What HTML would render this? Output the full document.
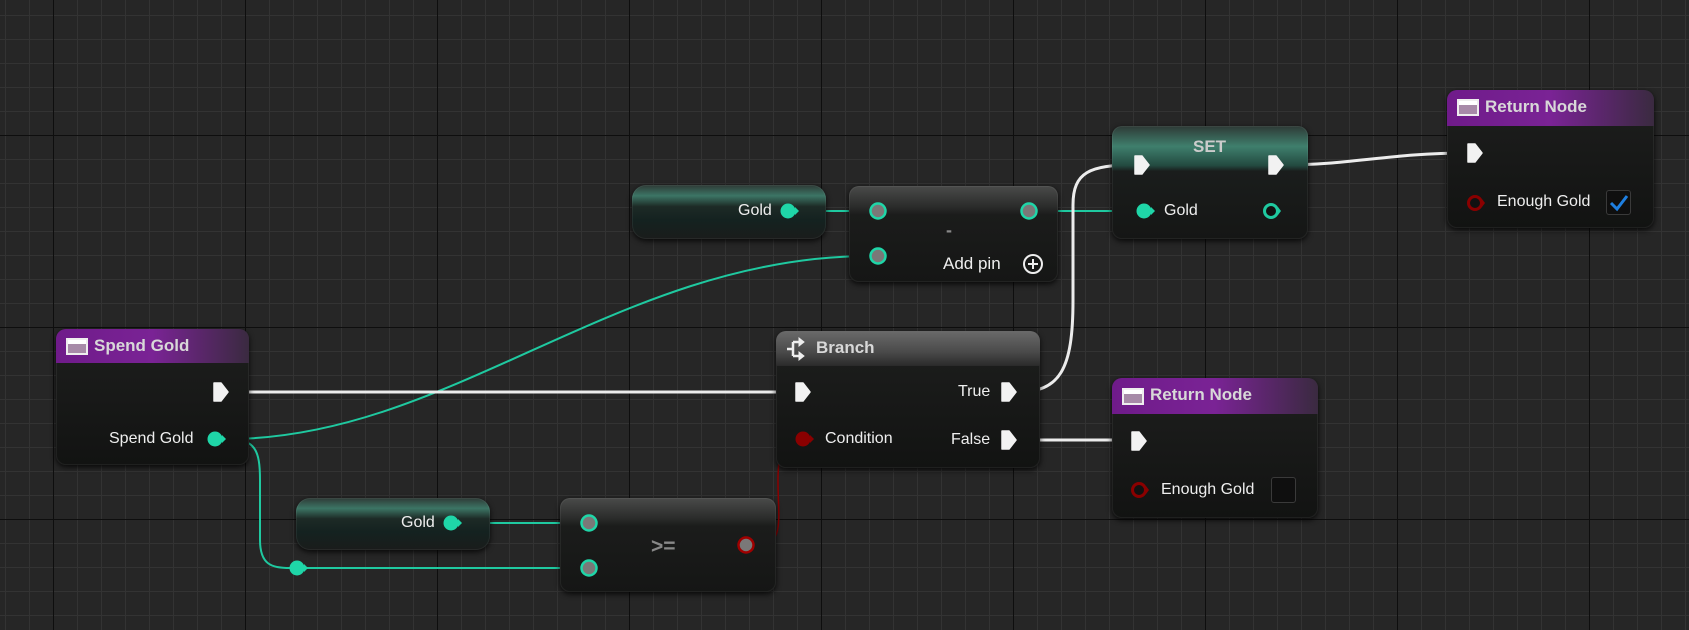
<!DOCTYPE html>
<html><head><meta charset="utf-8"><style>
html,body{margin:0;padding:0;width:1689px;height:630px;overflow:hidden;background:#262626;font-family:"Liberation Sans",sans-serif;}
#grid{position:absolute;left:0;top:0;width:1689px;height:630px;
background-image:
linear-gradient(to right,#0e0e0e 0,#0e0e0e 1px,transparent 1px),
linear-gradient(to bottom,#0e0e0e 0,#0e0e0e 1px,transparent 1px),
linear-gradient(to right,#333 0,#333 1px,transparent 1px),
linear-gradient(to bottom,#333 0,#333 1px,transparent 1px);
background-size:192px 192px,192px 192px,24px 24px,24px 24px;
background-position:53px 0,0 135px,53px 0,0 135px;}
.n{position:absolute;border-radius:10px;background:linear-gradient(#1e1f1e,#121312);box-shadow:0 2px 6px rgba(0,0,0,.8),inset 0 0 0 1px rgba(255,255,255,.06);}
.h{position:absolute;left:0;right:0;top:0;border-radius:10px 10px 0 0;color:#d8d8d8;font-weight:bold;font-size:17px;line-height:34px;padding-left:38px;box-sizing:border-box}
.ph{background:linear-gradient(to right,#6f1b8a,#7a2395 50%,#3a2a40 100%)}
.ico{position:absolute;left:10px;top:9px;width:22px;height:17px;border:2px solid #eee;box-sizing:border-box;background:linear-gradient(#fff 0 30%,#a78aa8 30%)}
.pure{background:linear-gradient(#4a4b4a,#2a2b2a 22%,#1b1c1b 30%,#151615);}
.var{background:linear-gradient(#2e3a36,#3c7565 20%,#1d2a26 40%,#142220 65%,#1a1c1b 100%);border-radius:14px}
.t{position:absolute;color:#eee;font-size:16px;white-space:nowrap}
.setg{background:linear-gradient(#2e3a36,#3f7f6d 18%,#234a40 35%,#1a1d1c 40%,#151615);}
</style></head><body>
<div id="grid"></div>
<svg width="1689" height="630" style="position:absolute;left:0;top:0" fill="none">
<g stroke="#1fc9a0" stroke-width="2">
<path d="M228 439 C450 439 620 256 870 256"/>
<path d="M228 439 C255 439 260 450 260 480 L260 540 C260 565 272 568 290 568 L589 568"/>
<path d="M463 523 L589 523"/>
<path d="M800 211 L878 211"/>
<path d="M1029 211 L1144 211"/>
</g>
<g stroke="#ececec" stroke-width="3">
<path d="M232 392 L795 392"/>
<path d="M1017 392 C1060 392 1073 370 1073 300 L1073 205 C1073 172 1090 165 1134 165"/>
<path d="M1017 440 L1133 440"/>
<path d="M1284 165 C1350 165 1390 153 1468 153"/>
</g>
<path d="M757 545 C785 545 778 520 778 480 C778 450 785 439 797 439" stroke="#8a0000" stroke-width="1.5"/>
</svg>

<div class="n" style="left:56px;top:329px;width:193px;height:136px"><div class="h ph" style="height:34px">Spend Gold<div class="ico"></div></div></div>
<div class="t" style="left:109px;top:430px">Spend Gold</div>

<div class="n var" style="left:632px;top:185px;width:194px;height:54px"></div>
<div class="t" style="left:738px;top:202px">Gold</div>

<div class="n var" style="left:296px;top:498px;width:194px;height:52px"></div>
<div class="t" style="left:401px;top:514px">Gold</div>

<div class="n pure" style="left:849px;top:186px;width:209px;height:96px"></div>
<div class="t" style="left:946px;top:220px;color:#888;font-weight:bold;font-size:18px">-</div>
<div class="t" style="left:943px;top:254px;font-size:17px">Add pin</div>

<div class="n setg" style="left:1112px;top:126px;width:196px;height:113px"></div>
<div class="t" style="left:1193px;top:137px;color:#ccc;font-weight:bold;font-size:17px">SET</div>
<div class="t" style="left:1164px;top:202px">Gold</div>

<div class="n" style="left:1447px;top:90px;width:207px;height:138px"><div class="h ph" style="height:36px">Return Node<div class="ico"></div></div></div>
<div class="t" style="left:1497px;top:193px">Enough Gold</div>
<div style="position:absolute;left:1606px;top:190px;width:25px;height:25px;border:1px solid #3a3a3a;border-radius:3px;background:#0f0f0f;box-sizing:border-box"></div>

<div class="n" style="left:776px;top:331px;width:264px;height:137px"><div class="h" style="height:35px;background:linear-gradient(#6a6a6a,#4a4a4a 60%,#2a2a2a);padding-left:40px">Branch</div></div>
<div class="t" style="left:825px;top:430px">Condition</div>
<div class="t" style="left:958px;top:383px">True</div>
<div class="t" style="left:951px;top:431px">False</div>

<div class="n" style="left:1112px;top:378px;width:206px;height:140px"><div class="h ph" style="height:36px">Return Node<div class="ico" style="top:10px"></div></div></div>
<div class="t" style="left:1161px;top:481px">Enough Gold</div>
<div style="position:absolute;left:1271px;top:477px;width:25px;height:26px;border:1px solid #3a3a3a;border-radius:3px;background:#0f0f0f;box-sizing:border-box"></div>

<div class="n pure" style="left:560px;top:498px;width:216px;height:94px"></div>
<div class="t" style="left:651px;top:535px;color:#888;font-weight:bold;font-size:21px">&gt;=</div>

<svg width="1689" height="630" style="position:absolute;left:0;top:0">
<defs>
<g id="ex"><path d="M-7 -9 H0 L7 0 L0 9 H-7 Z" fill="#f2f2f2" stroke="#f2f2f2" stroke-width="1.5" stroke-linejoin="round"/></g>
<g id="dp"><circle r="7.5" fill="#1fd6a8"/><path d="M7 -4 L11 0 L7 4Z" fill="#1fd6a8"/></g>
<g id="gp"><circle r="7.5" fill="#7a7878" stroke="#1fd6a8" stroke-width="2.5"/></g>
</defs>
<use href="#ex" x="221" y="392"/>
<use href="#dp" x="215" y="439"/>
<use href="#dp" x="788" y="211"/>
<use href="#dp" x="451" y="523"/>
<use href="#dp" x="297" y="568"/>
<use href="#gp" x="878" y="211"/>
<use href="#gp" x="878" y="256"/>
<use href="#gp" x="1029" y="211"/>
<use href="#gp" x="589" y="523"/>
<use href="#gp" x="589" y="568"/>
<circle cx="746" cy="545" r="7.5" fill="#7a7878" stroke="#a00000" stroke-width="2.5"/>
<circle cx="1033" cy="264" r="9" fill="none" stroke="#eee" stroke-width="2"/>
<path d="M1028 264 H1038 M1033 259 V269" stroke="#eee" stroke-width="2"/>
<use href="#ex" x="1142" y="165"/>
<use href="#ex" x="1276" y="165"/>
<use href="#dp" x="1144" y="211"/>
<circle cx="1271" cy="211" r="6.5" fill="#111" stroke="#1fc9a0" stroke-width="3"/>
<path d="M1278 207 L1281 211 L1278 215Z" fill="#1fc9a0"/>
<use href="#ex" x="1475" y="153"/>
<circle cx="1475" cy="203" r="6.5" fill="#111" stroke="#8a0000" stroke-width="3"/>
<path d="M1482 199 L1485 203 L1482 207Z" fill="#8a0000"/>
<path d="M1611 203 L1617 209 L1627 196" fill="none" stroke="#1e7fe0" stroke-width="3"/>
<use href="#ex" x="803" y="392"/>
<circle cx="803" cy="439" r="7.5" fill="#8a0000"/><path d="M810 435 L814 439 L810 443Z" fill="#8a0000"/>
<use href="#ex" x="1009" y="392"/>
<use href="#ex" x="1009" y="440"/>
<use href="#ex" x="1139" y="441"/>
<circle cx="1139" cy="490" r="6.5" fill="#111" stroke="#8a0000" stroke-width="3"/>
<path d="M1146 486 L1149 490 L1146 494Z" fill="#8a0000"/>
<g stroke="#eee" stroke-width="2.5" fill="none">
<path d="M787 349 H793 M793 342 V356 M793 342 H802 M793 356 H802"/>
<path d="M799 338 L804 342 L799 346Z M799 352 L804 356 L799 360Z" fill="#eee" stroke-width="1"/>
</g>
</svg>
</body></html>
